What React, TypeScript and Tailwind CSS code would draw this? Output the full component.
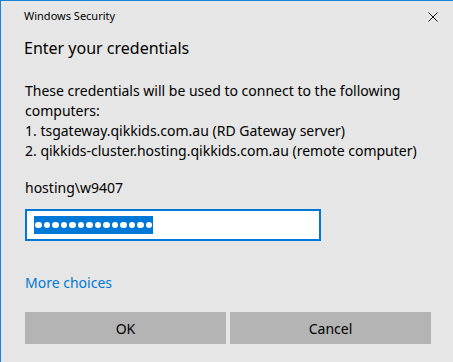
export default function App() {
  return (
    <div
      className="w-[453px] h-[362px] bg-[#e6e6e6] border-t border-l border-[#1883d7] flex flex-col text-black overflow-hidden"
      style={{ fontFamily: '"Segoe UI", "Noto Sans", sans-serif' }}
    >
      <div className="flex items-start justify-between pl-[23px] pr-[15px] pt-[7px]">
        <span className="text-[11px] leading-[16px]">Windows Security</span>
        <button className="mt-[4px] w-[10px] h-[10px]">
          <svg viewBox="0 0 10 10" width="10" height="10" className="block">
            <path d="M0.5 0.5 L9.5 9.5 M9.5 0.5 L0.5 9.5" stroke="#111" strokeWidth="1" />
          </svg>
        </button>
      </div>
      <div className="pl-[23px] mt-[12px]">
        <h1 className="text-[16px] leading-[24px] font-normal">Enter your credentials</h1>
      </div>
      <div className="pl-[24px] mt-[21px] text-[14px] leading-[20px]">
        <p>These credentials will be used to connect to the following</p>
        <p>computers:</p>
        <p>1. tsgateway.qikkids.com.au (RD Gateway server)</p>
        <p>2. qikkids-cluster.hosting.qikkids.com.au (remote computer)</p>
        <p className="mt-[17px]">hosting\w9407</p>
      </div>
      <div className="pl-[24px] mt-[11px]">
        <div className="w-[296px] h-[32px] bg-white border-2 border-[#0078d7] flex items-center pl-[7px]">
          <span className="bg-[#0078d7] h-[18px] w-[119px] flex items-center gap-[2px] pl-[1px]">
            {Array.from({ length: 14 }).map((_, i) => (
              <span key={i} className="w-[6.5px] h-[6.5px] rounded-full bg-white" />
            ))}
          </span>
        </div>
      </div>
      <div className="pl-[24px] mt-[31px] leading-[20px]">
        <a className="text-[14px] text-[#0078d7] cursor-pointer">More choices</a>
      </div>
      <div className="pl-[24px] mt-[19px] flex gap-[4px]">
        <button className="w-[201px] h-[32px] bg-[#b4b4b4] text-[14px]">OK</button>
        <button className="w-[201px] h-[32px] bg-[#b4b4b4] text-[14px]">Cancel</button>
      </div>
    </div>
  );
}
